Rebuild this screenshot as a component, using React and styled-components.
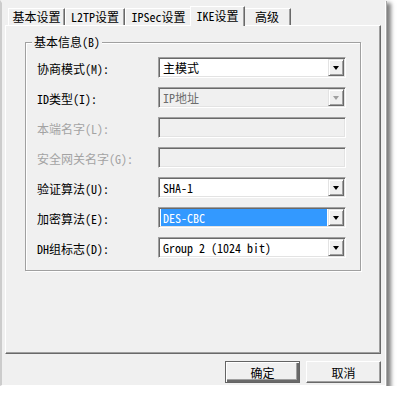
import styled, { createGlobalStyle, css } from "styled-components"

const Global = createGlobalStyle`
    body {
        margin:0;
        background:#ffffff;
        font-family:"Noto Sans Mono CJK SC", "Noto Sans CJK SC", "DejaVu Sans Mono", monospace;
        font-size:12px;
    }
`

const Frame = styled.div`
    box-sizing:border-box;
    width:386px;
    height:386px;
    display:flex;
    flex-direction:column;
    padding:3px 4px 2px 3px;
    background:#f0f0f0;
    border-left:2px solid #cccccc;
    border-top:3px solid #f0f0f0;
    border-right:1px solid #ffffff;
    border-bottom:1px solid #ffffff;
    box-shadow:1px 1px 0 #a8a8a8, 4px 4px 4px 1px rgba(0,0,0,0.5);
    color:#000;
`

const TabStrip = styled.div`
    height:19px;
    display:flex;
    align-items:flex-end;
    padding-left:3px;
`

const Tab = styled.div`
    box-sizing:border-box;
    width:${p => p.w}px;
    height:17px;
    display:flex;
    align-items:center;
    justify-content:center;
    border-top:1px solid #ffffff;
    border-left:1px solid #ffffff;
    border-right:1px solid #696969;
    box-shadow:inset -1px 0 0 #a0a0a0;
    background:#f0f0f0;
    line-height:14px;
    white-space:nowrap;
    ${p => p.active && css`
        height:20px;
        margin:0 -2px -1px;
        position:relative;
        z-index:1;
        padding-bottom:2px;
    `}
`

const Panel = styled.div`
    box-sizing:border-box;
    height:329px;
    border:1px solid;
    border-color:#ffffff #696969 #696969 #ffffff;
    box-shadow:inset -1px -1px 0 #a0a0a0;
    padding:8px 0 0 19px;
`

const Group = styled.fieldset`
    box-sizing:border-box;
    width:336px;
    margin:0;
    padding:0;
    border:1px solid #a0a0a0;
    box-shadow:inset 1px 1px 0 #ffffff, 1px 1px 0 #ffffff;
`

const Legend = styled.legend`
    margin-left:6px;
    padding:0 2px;
    line-height:16px;
    background:#f0f0f0;
`

const Rows = styled.div`
    display:flex;
    flex-direction:column;
    gap:9px;
    padding:7px 13px 12px 11px;
`

const Row = styled.div`
    display:flex;
    align-items:center;
`

const Label = styled.span`
    width:121px;
    padding-top:2px;
    color:${p => p.disabled ? "#a3a3a3" : "#000"};
    white-space:nowrap;
`

const Field = styled.div`
    box-sizing:border-box;
    width:188px;
    height:21px;
    display:flex;
    align-items:center;
    padding:1px;
    border:1px solid;
    border-color:#a0a0a0 #ffffff #ffffff #a0a0a0;
    box-shadow:inset 1px 1px 0 #696969, inset -1px -1px 0 #e3e3e3;
    background:${p => p.disabled ? "#f0f0f0" : "#ffffff"};
`

const Value = styled.div`
    flex:1;
    height:17px;
    margin-left:1px;
    padding-left:2px;
    line-height:17px;
    white-space:nowrap;
    color:${p => p.disabled ? "#6d6d6d" : "#000"};
    ${p => p.selected && css`
        background:#3399ff;
        color:#ffffff;
        margin-right:1px;
    `}
`

const DropButton = styled.div`
    box-sizing:border-box;
    width:16px;
    height:17px;
    display:flex;
    align-items:center;
    justify-content:center;
    border:1px solid;
    border-color:#e3e3e3 #696969 #696969 #e3e3e3;
    box-shadow:inset 1px 1px 0 #ffffff, inset -1px -1px 0 #a0a0a0;
    background:#f0f0f0;
`

const Arrow = styled.span`
    width:0;
    height:0;
    border-left:3.5px solid transparent;
    border-right:3.5px solid transparent;
    border-top:4px solid ${p => p.disabled ? "#a0a0a0" : "#000"};
    margin-top:1px;
`

const ButtonRow = styled.div`
    display:flex;
    justify-content:flex-end;
    gap:6px;
    margin-top:7px;
`

const Button = styled.div`
    box-sizing:border-box;
    width:75px;
    height:22px;
    display:flex;
    align-items:center;
    justify-content:center;
    border:1px solid;
    border-color:#ffffff #696969 #696969 #ffffff;
    box-shadow:inset -1px -1px 0 #a0a0a0;
    background:#f0f0f0;
    ${p => p.primary && css`
        border:1px solid #646464;
        box-shadow:inset 1px 1px 0 #ffffff, inset -2px -2px 0 #696969, inset -3px -3px 0 #a0a0a0;
    `}
`

const tabs = [
    { text: "基本设置", w: 57 },
    { text: "L2TP设置", w: 60 },
    { text: "IPSec设置", w: 67 },
    { text: "IKE设置", w: 55, active: true },
    { text: "高级", w: 48 },
]

const fields = [
    { label: "协商模式(M):", value: "主模式", combo: true },
    { label: "ID类型(I):", value: "IP地址", combo: true, locked: true },
    { label: "本端名字(L):", value: "", disabled: true },
    { label: "安全网关名字(G):", value: "", disabled: true },
    { label: "验证算法(U):", value: "SHA-1", combo: true },
    { label: "加密算法(E):", value: "DES-CBC", combo: true, selected: true },
    { label: "DH组标志(D):", value: "Group 2 (1024 bit)", combo: true },
]

export default function App() {
    return (
        <>
            <Global />
            <Frame>
                <TabStrip>
                    {tabs.map(t => (
                        <Tab key={t.text} w={t.w} active={t.active}>{t.text}</Tab>
                    ))}
                </TabStrip>
                <Panel>
                    <Group>
                        <Legend>基本信息(B)</Legend>
                        <Rows>
                            {fields.map(f => (
                                <Row key={f.label}>
                                    <Label disabled={f.disabled}>{f.label}</Label>
                                    <Field disabled={f.disabled || f.locked}>
                                        <Value disabled={f.locked} selected={f.selected}>{f.value}</Value>
                                        {f.combo && (
                                            <DropButton>
                                                <Arrow disabled={f.locked} />
                                            </DropButton>
                                        )}
                                    </Field>
                                </Row>
                            ))}
                        </Rows>
                    </Group>
                </Panel>
                <ButtonRow>
                    <Button primary>确定</Button>
                    <Button>取消</Button>
                </ButtonRow>
            </Frame>
        </>
    )
}
